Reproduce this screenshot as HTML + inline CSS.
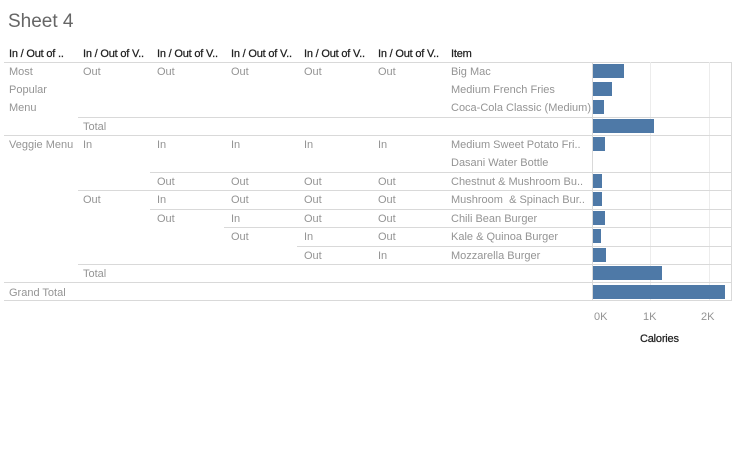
<!DOCTYPE html>
<html><head><meta charset="utf-8"><style>
body{margin:0;width:736px;height:454px;background:#fff;position:relative;overflow:hidden;font-family:"Liberation Sans",sans-serif}
.t{position:absolute;font-size:11px;color:#949494;white-space:nowrap;line-height:14px;margin-top:1px}
.h{position:absolute;font-size:11px;color:#222;white-space:nowrap;line-height:14px;letter-spacing:-0.2px;-webkit-text-stroke:0.25px #222}
.l{position:absolute;height:1px;background:#d9d9d9}
.v{position:absolute;width:1px;background:#ececec}
.b{position:absolute;left:593px;height:14px;background:#4e79a7}
</style></head><body>
<div style="position:absolute;left:8px;top:11px;font-size:19px;color:#666;font-family:'Liberation Sans',sans-serif">Sheet 4</div>
<div class="h" style="left:9px;top:47px">In / Out of ..</div>
<div class="h" style="left:83px;top:47px">In / Out of V..</div>
<div class="h" style="left:157px;top:47px">In / Out of V..</div>
<div class="h" style="left:231px;top:47px">In / Out of V..</div>
<div class="h" style="left:304px;top:47px">In / Out of V..</div>
<div class="h" style="left:378px;top:47px">In / Out of V..</div>
<div class="h" style="left:451px;top:47px">Item</div>

<div class="l" style="left:4px;width:728px;top:62px"></div>
<div class="v" style="left:592px;top:62px;height:238px;background:#d9d9d9"></div>
<div class="v" style="left:650px;top:62px;height:238px"></div>
<div class="v" style="left:709px;top:62px;height:238px"></div>
<div class="v" style="left:731px;top:62px;height:238px;background:#d9d9d9"></div>

<div class="l" style="left:78px;width:654px;top:117px"></div>
<div class="l" style="left:4px;width:728px;top:135px"></div>
<div class="l" style="left:150px;width:582px;top:172px"></div>
<div class="l" style="left:78px;width:654px;top:190px"></div>
<div class="l" style="left:150px;width:582px;top:209px"></div>
<div class="l" style="left:224px;width:508px;top:227px"></div>
<div class="l" style="left:297px;width:435px;top:246px"></div>
<div class="l" style="left:78px;width:654px;top:264px"></div>
<div class="l" style="left:4px;width:728px;top:282px"></div>
<div class="l" style="left:4px;width:728px;top:300px"></div>

<div class="t" style="left:9px;top:64px">Most</div>
<div class="t" style="left:9px;top:82px">Popular</div>
<div class="t" style="left:9px;top:100px">Menu</div>
<div class="t" style="left:83px;top:64px">Out</div>
<div class="t" style="left:157px;top:64px">Out</div>
<div class="t" style="left:231px;top:64px">Out</div>
<div class="t" style="left:304px;top:64px">Out</div>
<div class="t" style="left:378px;top:64px">Out</div>
<div class="t" style="left:451px;top:64px">Big Mac</div>
<div class="t" style="left:451px;top:82px">Medium French Fries</div>
<div class="t" style="left:451px;top:100px">Coca-Cola Classic (Medium)</div>
<div class="t" style="left:83px;top:119px">Total</div>

<div class="t" style="left:9px;top:137px">Veggie Menu</div>
<div class="t" style="left:83px;top:137px">In</div>
<div class="t" style="left:157px;top:137px">In</div>
<div class="t" style="left:231px;top:137px">In</div>
<div class="t" style="left:304px;top:137px">In</div>
<div class="t" style="left:378px;top:137px">In</div>
<div class="t" style="left:451px;top:137px">Medium Sweet Potato Fri..</div>
<div class="t" style="left:451px;top:155px">Dasani Water Bottle</div>
<div class="t" style="left:157px;top:174px">Out</div>
<div class="t" style="left:231px;top:174px">Out</div>
<div class="t" style="left:304px;top:174px">Out</div>
<div class="t" style="left:378px;top:174px">Out</div>
<div class="t" style="left:451px;top:174px">Chestnut &amp; Mushroom Bu..</div>
<div class="t" style="left:83px;top:192px">Out</div>
<div class="t" style="left:157px;top:192px">In</div>
<div class="t" style="left:231px;top:192px">Out</div>
<div class="t" style="left:304px;top:192px">Out</div>
<div class="t" style="left:378px;top:192px">Out</div>
<div class="t" style="left:451px;top:192px">Mushroom &nbsp;&amp; Spinach Bur..</div>
<div class="t" style="left:157px;top:211px">Out</div>
<div class="t" style="left:231px;top:211px">In</div>
<div class="t" style="left:304px;top:211px">Out</div>
<div class="t" style="left:378px;top:211px">Out</div>
<div class="t" style="left:451px;top:211px">Chili Bean Burger</div>
<div class="t" style="left:231px;top:229px">Out</div>
<div class="t" style="left:304px;top:229px">In</div>
<div class="t" style="left:378px;top:229px">Out</div>
<div class="t" style="left:451px;top:229px">Kale &amp; Quinoa Burger</div>
<div class="t" style="left:304px;top:248px">Out</div>
<div class="t" style="left:378px;top:248px">In</div>
<div class="t" style="left:451px;top:248px">Mozzarella Burger</div>
<div class="t" style="left:83px;top:266px">Total</div>
<div class="t" style="left:9px;top:285px">Grand Total</div>

<div class="b" style="top:64px;width:31px"></div>
<div class="b" style="top:82px;width:19px"></div>
<div class="b" style="top:100px;width:11px"></div>
<div class="b" style="top:119px;width:61px"></div>
<div class="b" style="top:137px;width:12px"></div>
<div class="b" style="top:174px;width:9px"></div>
<div class="b" style="top:192px;width:9px"></div>
<div class="b" style="top:211px;width:12px"></div>
<div class="b" style="top:229px;width:8px"></div>
<div class="b" style="top:248px;width:13px"></div>
<div class="b" style="top:266px;width:69px"></div>
<div class="b" style="top:285px;width:132px"></div>

<div class="t" style="left:594px;top:309px">0K</div>
<div class="t" style="left:643px;top:309px">1K</div>
<div class="t" style="left:701px;top:309px">2K</div>
<div class="h" style="left:640px;top:332px">Calories</div>
</body></html>
